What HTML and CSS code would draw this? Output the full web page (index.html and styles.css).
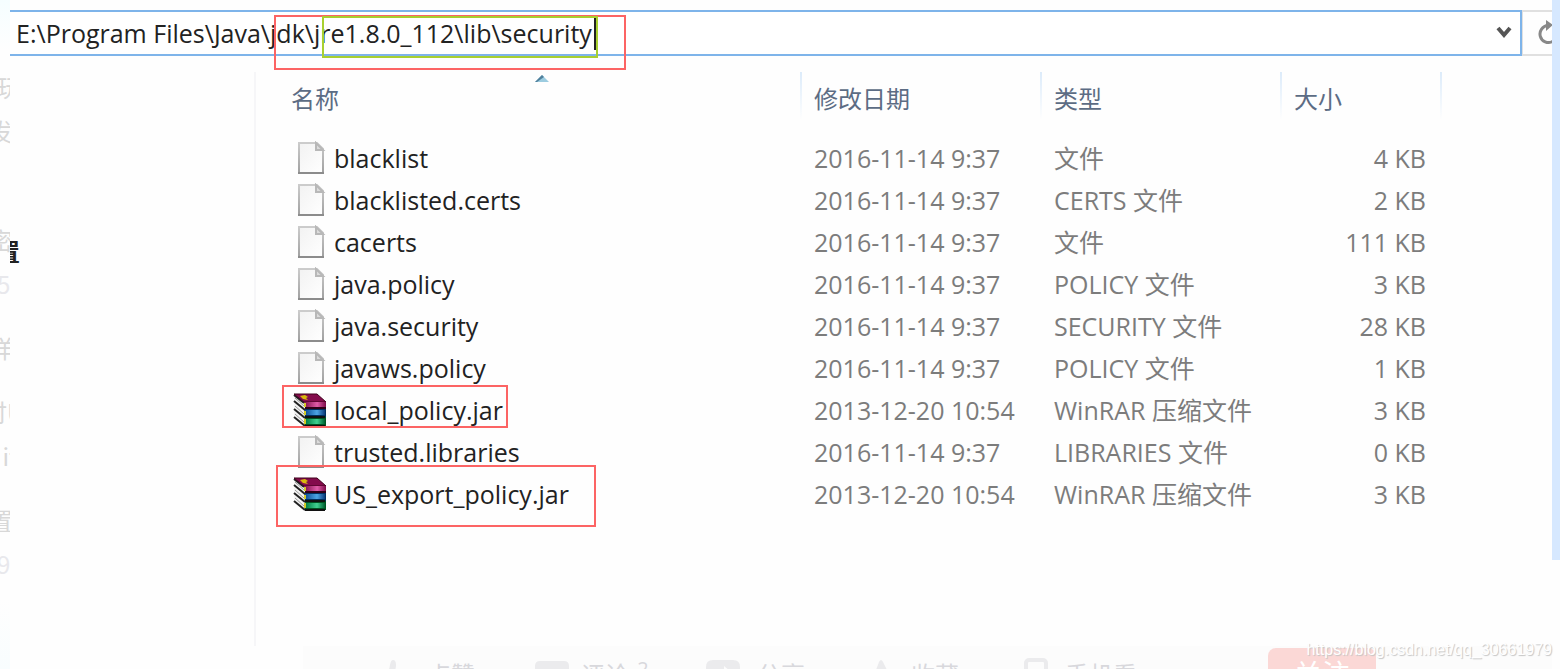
FILE: index.html
```html
<!DOCTYPE html>
<html lang="zh-CN">
<head>
    <meta charset="UTF-8">
    <meta name="viewport" content="width=device-width, initial-scale=1.0">
    <title>security</title>
    <link rel="stylesheet" href="styles.css">
</head>
<body>
    <!-- 图标 -->
    <svg class="symbols" aria-hidden="true">
        <defs>
            <linearGradient id="paper" x1="0" y1="0" x2="1" y2="1">
                <stop offset="0" stop-color="#f2f2f2"/>
                <stop offset="1" stop-color="#ffffff"/>
            </linearGradient>
            <linearGradient id="edge" x1="0" y1="0" x2="0" y2="1">
                <stop offset="0" stop-color="#cccccc"/>
                <stop offset="1" stop-color="#a0a0a0"/>
            </linearGradient>
            <linearGradient id="red" x1="0" y1="0" x2="1" y2="0">
                <stop offset="0" stop-color="#7c0c48"/>
                <stop offset="0.6" stop-color="#e05ca8"/>
                <stop offset="1" stop-color="#7c0c48"/>
            </linearGradient>
            <linearGradient id="blue" x1="0" y1="0" x2="1" y2="0">
                <stop offset="0" stop-color="#0c4c94"/>
                <stop offset="0.6" stop-color="#4ca4e4"/>
                <stop offset="1" stop-color="#0c3c7c"/>
            </linearGradient>
            <linearGradient id="green" x1="0" y1="0" x2="1" y2="0">
                <stop offset="0" stop-color="#007840"/>
                <stop offset="0.6" stop-color="#40d090"/>
                <stop offset="1" stop-color="#006030"/>
            </linearGradient>
        </defs>
        <symbol id="icon-file" viewBox="0 0 34 34">
            <path d="M6 2h18l6 6v24H6z" fill="url(#paper)" stroke="url(#edge)" stroke-width="2"/>
            <path d="M23 2v7h7z" fill="#dcdcdc" stroke="#b8b8b8" stroke-width="2"/>
            <path d="M5 32h26" stroke="#8c8c8c" stroke-width="2"/>
        </symbol>
        <symbol id="icon-rar" viewBox="0 0 34 34">
            <!-- 书页 -->
            <path d="M1 2l11 10v21L1 23z" fill="#f4f4f4"/>
            <path d="M2 5l9 8M2 13l9 8M2 21l9 8" stroke="#999" stroke-width="1"/>
            <path d="M1 8l11 9M1 16l11 9M1 24l11 9M1 2l10 8" stroke="#222" stroke-width="2"/>
            <!-- 绿 -->
            <path d="M11 27l2-3h20v9H12z" fill="#052"/>
            <path d="M12 26h20v5H12z" fill="url(#green)"/>
            <path d="M12 33h20" stroke="#111" stroke-width="2"/>
            <!-- 蓝 -->
            <path d="M11 18l2-3h20v9H12z" fill="#013060"/>
            <path d="M12 17h20v5H12z" fill="url(#blue)"/>
            <path d="M12 24h20" stroke="#111" stroke-width="2"/>
            <!-- 红 -->
            <path d="M1 1h23l9 8H11z" fill="#840c4c" stroke="#40001c" stroke-width="1"/>
            <path d="M11 9h22v5H12z" fill="url(#red)"/>
            <path d="M12 15h21" stroke="#300018" stroke-width="2"/>
            <path d="M7 3l5-1 3 2-2 1 2 2-5-1z" fill="#d8b80c"/>
            <path d="M12 10v4M12 18v4M12 26v5" stroke="#d4cc28" stroke-width="2"/>
        </symbol>
    </svg>

    <div class="page">
        <!-- 左侧露出的底层文字 -->
        <aside class="gutter">
            <div class="group first">玩<br><span class="half">发</span></div>
            <div class="group second"><span class="half">密行</span><br><span class="pale">5</span></div>
            <div class="group"><span class="half">样</span></div>
            <div class="group"><span class="most">时U</span><br>&nbsp;it</div>
            <div class="group"><span class="half">置</span><br><span class="pale">99</span></div>
        </aside>

        <main class="explorer">
            <div class="toolbar">
                <form class="address">
                    <input type="text" aria-label="地址" value="E:\Program Files\Java\jdk\jre1.8.0_112\lib\security">
                    <button type="button" aria-label="历史记录">
                        <svg width="16" height="14" viewBox="0 0 16 14"><path d="M2 2l6 7 6-7" fill="none" stroke="#555" stroke-width="4"/></svg>
                    </button>
                </form>
                <button class="refresh" type="button" aria-label="刷新">
                    <svg width="28" height="28" viewBox="0 0 28 28">
                        <path d="M13 6.500a8.500 8.500 0 1 0 7 3" fill="none" stroke="#888" stroke-width="3"/>
                        <path d="M11 1v11l7-6z" fill="#888"/>
                    </svg>
                </button>
                <span class="mark mark-path"></span>
                <span class="mark mark-jre"></span>
            </div>

            <div class="content">
                <nav class="sidebar">
                    <span class="node">置</span>
                </nav>
                <div class="files">
                    <table>
                        <thead>
                            <tr>
                                <th class="name">名称<svg class="sort" width="16" height="8" viewBox="0 0 16 8"><path d="M1 8l7-7 7 7z" fill="#9ccce0"/><path d="M1 8l7-7 2 2-7 5z" fill="#50809c"/></svg></th>
                                <th class="date">修改日期</th>
                                <th class="type">类型</th>
                                <th class="size">大小</th>
                            </tr>
                        </thead>
                        <tbody>
                            <tr>
                                <td><div class="file"><svg class="icon"><use href="#icon-file"/></svg>blacklist</div></td>
                                <td>2016-11-14 9:37</td>
                                <td>文件</td>
                                <td>4 KB</td>
                            </tr>
                            <tr>
                                <td><div class="file"><svg class="icon"><use href="#icon-file"/></svg>blacklisted.certs</div></td>
                                <td>2016-11-14 9:37</td>
                                <td>CERTS 文件</td>
                                <td>2 KB</td>
                            </tr>
                            <tr>
                                <td><div class="file"><svg class="icon"><use href="#icon-file"/></svg>cacerts</div></td>
                                <td>2016-11-14 9:37</td>
                                <td>文件</td>
                                <td>111 KB</td>
                            </tr>
                            <tr>
                                <td><div class="file"><svg class="icon"><use href="#icon-file"/></svg>java.policy</div></td>
                                <td>2016-11-14 9:37</td>
                                <td>POLICY 文件</td>
                                <td>3 KB</td>
                            </tr>
                            <tr>
                                <td><div class="file"><svg class="icon"><use href="#icon-file"/></svg>java.security</div></td>
                                <td>2016-11-14 9:37</td>
                                <td>SECURITY 文件</td>
                                <td>28 KB</td>
                            </tr>
                            <tr>
                                <td><div class="file"><svg class="icon"><use href="#icon-file"/></svg>javaws.policy</div></td>
                                <td>2016-11-14 9:37</td>
                                <td>POLICY 文件</td>
                                <td>1 KB</td>
                            </tr>
                            <tr>
                                <td><div class="file"><svg class="icon"><use href="#icon-rar"/></svg>local_policy.jar<span class="mark mark-local"></span></div></td>
                                <td>2013-12-20 10:54</td>
                                <td>WinRAR 压缩文件</td>
                                <td>3 KB</td>
                            </tr>
                            <tr>
                                <td><div class="file"><svg class="icon"><use href="#icon-file"/></svg>trusted.libraries</div></td>
                                <td>2016-11-14 9:37</td>
                                <td>LIBRARIES 文件</td>
                                <td>0 KB</td>
                            </tr>
                            <tr>
                                <td><div class="file"><svg class="icon"><use href="#icon-rar"/></svg>US_export_policy.jar<span class="mark mark-us"></span></div></td>
                                <td>2013-12-20 10:54</td>
                                <td>WinRAR 压缩文件</td>
                                <td>3 KB</td>
                            </tr>
                        </tbody>
                    </table>
                </div>
            </div>

            <!-- 底部操作栏 -->
            <footer class="actions">
                <button type="button"><svg width="34" height="34" viewBox="0 0 34 34"><path d="M5 14c5-3 3-14 7-14 3 0 4 4 2 11h12v20H5zM-2 14h5v17h-5z"/></svg>点赞</button>
                <button type="button"><svg width="34" height="34" viewBox="0 0 34 34"><path d="M5 1h24q5 0 5 5v18q0 5-5 5H18l-8 5v-5H5q-5 0-5-5V6q0-5 5-5z"/></svg>评论<sup>2</sup></button>
                <button type="button"><svg width="34" height="34" viewBox="0 0 34 34"><path fill-rule="evenodd" d="M4 0h18q7 0 7 7v20q0 6-7 6H2q-7 0-7-6V7q0-7 7-7zM13 6l11 9-11 9v-5q-6 0-10 5 1-12 10-13z"/></svg>分享</button>
                <button type="button"><svg width="34" height="34" viewBox="0 0 34 34"><path d="M14 2q2-4 4 0l4 8 12 1-9 9 3 13-12-7-11 7 3-13-8-9 11-1z"/></svg>收藏</button>
                <button type="button"><svg width="34" height="34" viewBox="0 0 34 34"><rect x="7" y="0" width="20" height="34" rx="3" fill="none" stroke="#ebebed" stroke-width="4"/></svg>手机看</button>
                <button class="follow" type="button">关注</button>
            </footer>
        </main>

        <div class="edge"></div>
        <a class="watermark" href="https://blog.csdn.net/qq_30661979">https://blog.csdn.net/qq_30661979</a>
    </div>
</body>
</html>
```
FILE: styles.css
```css
* {
    box-sizing: border-box;
}

body {
    margin: 0;
    background: #fefefe;
    font-family: "Open Sans", "Noto Sans CJK SC", sans-serif;
    font-size: 24px;
    color: #222;
}

button, input {
    font: inherit;
    border: none;
    background: none;
    padding: 0;
}

.symbols {
    position: absolute;
    width: 0;
    height: 0;
}

.page {
    position: relative;
    display: flex;
    height: 100vh;
    overflow: hidden;
}

/* 左侧边缘 */
.gutter {
    flex: none;
    width: 10px;
    overflow: hidden;
    white-space: nowrap;
    font-family: "Noto Sans CJK SC", sans-serif;
    line-height: 44px;
    color: #d8d8d8;
    background: linear-gradient(#f5feff, #fefefe 50px, #fefefe 600px, #f8fdfe);
}

.group {
    margin-top: 20px;
    margin-left: -3px;
}

.group.first,
.group.second {
    margin-top: 65px;
}

.half {
    margin-left: -8px;
}

.most {
    margin-left: -14px;
}

.pale {
    color: #e8e8ec;
}

.explorer {
    flex: 1;
    min-width: 0;
    display: flex;
    flex-direction: column;
}

/* 地址栏 */
.toolbar {
    position: relative;
    display: flex;
    flex: none;
    height: 62px;
    padding-top: 10px;
    margin-bottom: 10px;
}

.address {
    display: flex;
    flex: 1;
    height: 46px;
    border: 2px solid #7eb4ea;
    border-left: none;
    background: #fff;
}

.address input {
    flex: 1;
    padding-left: 6px;
    outline: none;
    font-size: 25px;
    color: #222;
}

.address button {
    width: 32px;
}

.refresh {
    width: 30px;
    height: 46px;
    padding-left: 12px;
    overflow: hidden;
    border: 2px solid #e0e0e0;
    border-width: 2px 0 2px 1px;
}

.address svg,
.refresh svg {
    display: block;
}

.address svg {
    margin: 0 auto;
}

/* 标注框 */
.mark {
    position: absolute;
    border: 2px solid #fc6464;
    pointer-events: none;
}

.mark-path {
    left: 264px;
    top: 15px;
    width: 352px;
    height: 55px;
}

.mark-jre {
    left: 312px;
    top: 16px;
    width: 276px;
    height: 42px;
    border-color: #a8d030;
}

/* 光标 */
.mark-jre::after {
    content: "";
    position: absolute;
    right: 0;
    top: 0;
    width: 2px;
    height: 32px;
    background: #222;
}

.mark-local {
    left: 1px;
    top: -4px;
    width: 226px;
    height: 43px;
}

.mark-us {
    left: -5px;
    top: -8px;
    width: 320px;
    height: 62px;
}

.content {
    display: flex;
    flex: 1;
    min-height: 0;
}

.sidebar {
    flex: none;
    width: 246px;
    padding-top: 162px;
    overflow: hidden;
    border-right: 2px solid #f6f6f8;
}

.node {
    display: block;
    line-height: 36px;
    text-indent: -14px;
    font-weight: bold;
}

/* 文件列表 */
.files {
    flex: 1;
    padding: 0 110px 0 25px;
}

table {
    width: 100%;
    table-layout: fixed;
    border-collapse: separate;
    border-spacing: 0;
    color: #7c7c7c;
}

th {
    position: relative;
    height: 65px;
    padding: 6px 0 0 12px;
    vertical-align: top;
    text-align: left;
    font-weight: normal;
    line-height: 42px;
    color: #5c6c84;
    background: linear-gradient(#dcebfa, #fefefe) right top / 2px 48px no-repeat;
}

th.name {
    padding-left: 10px;
}

th.date,
th.type {
    width: 240px;
}

th.size {
    width: 160px;
}

.sort {
    position: absolute;
    left: 50%;
    top: 2px;
    margin-left: -8px;
}

td {
    height: 42px;
    padding: 0 0 0 12px;
    font-size: 25px;
    line-height: 42px;
    white-space: nowrap;
}

td:first-child {
    padding: 0;
}

td:last-child {
    padding-right: 16px;
    text-align: right;
}

.file {
    position: relative;
    display: flex;
    align-items: center;
    gap: 7px;
    height: 42px;
    padding-left: 12px;
    color: #222;
}

.icon {
    width: 34px;
    height: 34px;
}

/* 底部 */
.actions {
    display: flex;
    flex: none;
    align-items: flex-start;
    gap: 60px;
    height: 23px;
    margin-left: 293px;
    padding-left: 78px;
    overflow: hidden;
    background: #fcfcfc;
}

.actions button {
    display: flex;
    flex: none;
    gap: 12px;
    margin-top: 14px;
    line-height: 30px;
    color: #d8d8dc;
}

.actions svg {
    fill: #ebebed;
    overflow: visible;
}

.actions sup {
    width: 16px;
    margin-left: -6px;
    font-size: 20px;
    line-height: 18px;
}

.actions button.follow {
    width: 108px;
    height: 48px;
    margin: 2px 176px 0 auto;
    justify-content: center;
    border-radius: 8px;
    background: #fbd8d6;
    color: #fff;
    font-size: 28px;
    line-height: 52px;
}

.edge {
    flex: none;
    width: 8px;
    height: 560px;
    background: #d6e8ff;
}

.watermark {
    position: absolute;
    right: 8px;
    bottom: 8px;
    font-family: "Liberation Sans", sans-serif;
    font-size: 16px;
    line-height: 22px;
    color: #fff;
    text-decoration: none;
    text-shadow: 1px 1px 1px #c4c4c4;
}
```
